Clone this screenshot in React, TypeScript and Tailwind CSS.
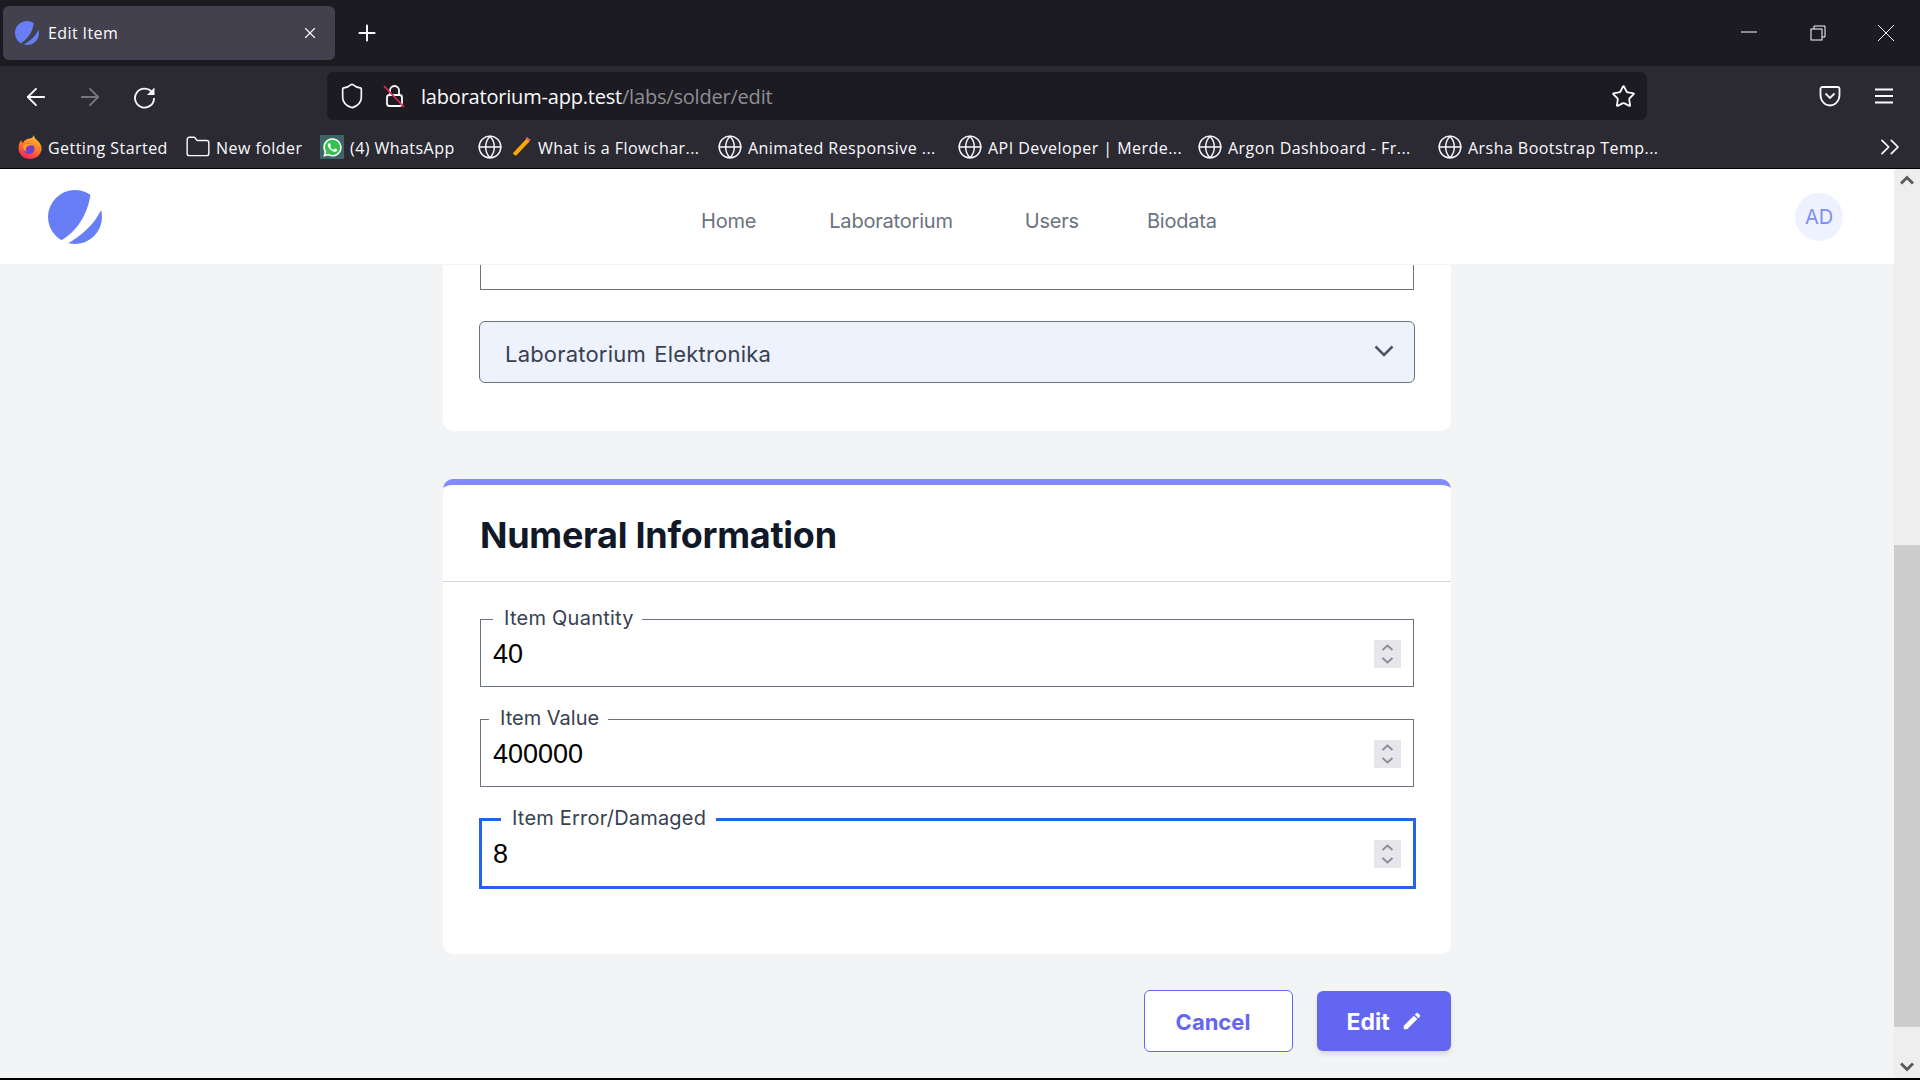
import { ArrowLeft, ArrowRight, ChevronsRight, Folder, Globe, Plus, Shield, Star, X } from 'lucide-react'
import { MdEdit } from 'react-icons/md'
import { FaWhatsapp } from 'react-icons/fa'
import type { ReactNode } from 'react'

function PlanetLogo({ size, stripe }: { size: string; stripe: string }) {
  return (
    <svg viewBox="0 0 54 54" className={size}>
      <circle cx="27" cy="27" r="27" className="fill-[#677ef6]" />
      <path d="M42.7 3 C40 25 28 42 13.7 50 L17 55 C32 47 47 35 55 16 Z" className={stripe} />
    </svg>
  )
}

function FirefoxIcon() {
  return (
    <svg viewBox="0 0 24 24" className="w-[24px] h-[24px]">
      <defs>
        <linearGradient id="fx" x1="0.7" y1="0" x2="0.3" y2="1">
          <stop offset="0" stopColor="#ffc22e" />
          <stop offset="0.5" stopColor="#ff7a2a" />
          <stop offset="1" stopColor="#f0245c" />
        </linearGradient>
      </defs>
      <path d="M16 0 C16 3 18 4 20 6 C23 9 24 12 23.5 15 C22.500 20 18 24 12 24 C6 24 1 20 0.500 14 C0.300 10 1.500 7 3.500 5 C3.500 6.500 4 7.500 5 8 C6 5 9 3.500 12 3.500 C14 3 15.500 2 16 0 Z" fill="url(#fx)" />
      <circle cx="11" cy="13.500" r="5.500" fill="#7a3cc8" />
      <path d="M5 11 C8 8 14 7 17 11 C15 10 12 10 10 11 C8 12 7 15 9 17 C6 16 5 14 5 11 Z" fill="#ff9a2e" />
    </svg>
  )
}

function WhatsAppIcon() {
  return (
    <span className="w-[24px] h-[24px] bg-[#3f6466] flex items-center justify-center relative">
      <span className="absolute w-[18px] h-[18px] rounded-full bg-[#35c04f]" />
      <FaWhatsapp size={21} className="text-white relative" />
    </span>
  )
}

function GlobeIcon() {
  return <Globe size={26} strokeWidth={1.3} className="text-[#fbfbfe] shrink-0 -mx-[1px]" />
}

function PencilIcon() {
  return (
    <svg viewBox="0 0 22 24" className="w-[21px] h-[24px] ml-[9px] shrink-0">
      <path d="M16 3 L20 6 L6 21 L1.500 23 L2 18 Z" fill="#f5a90f" stroke="#111" strokeWidth="0.6" />
      <path d="M16.500 1.500 L20.500 4.500 L19.500 6 L15.500 3 Z" fill="#f0647a" />
      <path d="M2 19 L1.500 23 L5 21.500 Z" fill="#222" />
    </svg>
  )
}

const bookmarks: { icon: ReactNode; label: string; width: string; extra?: ReactNode }[] = [
  { icon: <FirefoxIcon />, label: 'Getting Started', width: 'w-[168px]' },
  { icon: <Folder size={26} strokeWidth={1.3} className="text-[#fbfbfe] -mx-[1px]" />, label: 'New folder', width: 'w-[134px]' },
  { icon: <WhatsAppIcon />, label: '(4) WhatsApp', width: 'w-[158px]' },
  { icon: <GlobeIcon />, extra: <PencilIcon />, label: 'What is a Flowchar...', width: 'w-[240px]' },
  { icon: <GlobeIcon />, label: 'Animated Responsive ...', width: 'w-[240px]' },
  { icon: <GlobeIcon />, label: 'API Developer | Merde...', width: 'w-[240px]' },
  { icon: <GlobeIcon />, label: 'Argon Dashboard - Fr...', width: 'w-[240px]' },
  { icon: <GlobeIcon />, label: 'Arsha Bootstrap Temp...', width: 'w-[240px]' },
]

function TabStrip() {
  return (
    <div className="h-[66px] bg-[#1c1b22] flex items-start text-[#fbfbfe]">
      <div className="ml-[3px] mt-[6px] w-[332px] h-[54px] bg-[#42414d] rounded-[6px] flex items-center pl-[12px] pr-[16px]">
        <PlanetLogo size="w-[24px] h-[24px]" stripe="fill-[#42414d]" />
        <span className="ml-[9px] text-[16px] tracking-[0.4px] text-[#fbfbfe]">Edit Item</span>
        <X size={18} strokeWidth={1.5} className="ml-auto" />
      </div>
      <Plus size={26} strokeWidth={1.8} className="ml-[19px] mt-[20px]" />
      <div className="ml-auto flex items-center h-[66px] pr-[25px]">
        <svg viewBox="0 0 16 2" className="w-[16px] h-[2px] mb-[2px]"><path d="M0 1 H16" stroke="#fbfbfe" strokeWidth="1" /></svg>
        <svg viewBox="0 0 16 16" className="w-[16px] h-[16px] ml-[53px]" fill="none" stroke="#fbfbfe" strokeWidth="1">
          <rect x="1" y="4" width="11" height="11" />
          <path d="M4 4 V1 H15 V12 H12" />
        </svg>
        <svg viewBox="0 0 18 18" className="w-[18px] h-[18px] ml-[51px]" fill="none" stroke="#fbfbfe" strokeWidth="1">
          <path d="M1 1 L17 17 M17 1 L1 17" />
        </svg>
      </div>
    </div>
  )
}

function Toolbar() {
  return (
    <div className="h-[60px] bg-[#2b2a33] flex items-start text-[#fbfbfe]">
      <div className="flex items-center h-[60px] mt-[1px]">
        <ArrowLeft size={28} strokeWidth={1.6} className="ml-[22px]" />
        <ArrowRight size={28} strokeWidth={1.6} className="ml-[26px] text-[#77767c]" />
        <svg viewBox="0 0 24 24" className="w-[24px] h-[24px] ml-[29px]" fill="none">
          <path d="M19.500 8 A9.500 9.500 0 1 0 21 13" stroke="#fbfbfe" strokeWidth="1.8" />
          <path d="M21.500 2.500 V10 H14 Z" fill="#fbfbfe" />
        </svg>
      </div>
      <div className="ml-[170px] mt-[6px] w-[1320px] h-[48px] bg-[#1c1b22] rounded-[6px] flex items-center pl-[11px] pr-[11px]">
        <Shield size={28} strokeWidth={1.4} />
        <svg viewBox="0 0 24 24" className="w-[24px] h-[24px] ml-[16px]" fill="none">
          <rect x="5" y="11" width="15" height="11" rx="2.500" stroke="#fbfbfe" strokeWidth="1.800" />
          <path d="M8 11 V6.500 A4.500 4.500 0 0 1 17 6.500 V11" stroke="#fbfbfe" strokeWidth="1.800" />
          <path d="M2 2 L22 23" stroke="#e22850" strokeWidth="1.800" />
        </svg>
        <span className="ml-[15px] mt-[1px] text-[20px] tracking-[-0.2px]">
          laboratorium-app.test<span className="text-[#8f8f94]">/labs/solder/edit</span>
        </span>
        <Star size={25} strokeWidth={1.7} className="ml-auto" />
      </div>
      <div className="flex items-center h-[60px] ml-auto pr-[26px]">
        <svg viewBox="0 0 24 24" className="w-[24px] h-[24px]" fill="none" stroke="#fbfbfe" strokeWidth="1.800">
          <path d="M4.500 3 H19.500 A2 2 0 0 1 21.500 5 V11 C21.500 17 17 21.500 12 21.500 C7 21.500 2.500 17 2.500 11 V5 A2 2 0 0 1 4.500 3 Z" />
          <path d="M7.500 9.500 L12 14 L16.500 9.500" />
        </svg>
        <svg viewBox="0 0 20 16" className="w-[20px] h-[16px] ml-[32px]" fill="none" stroke="#fbfbfe" strokeWidth="1.800">
          <path d="M1 1.500 H19 M1 8 H19 M1 14.500 H19" />
        </svg>
      </div>
    </div>
  )
}

function BookmarkBar() {
  return (
    <div className="h-[43px] bg-[#2b2a33] border-b border-black flex items-start pt-[9px] pl-[18px] text-[#fbfbfe]">
      {bookmarks.map((b) => (
        <div key={b.label} className={`${b.width} flex items-center shrink-0 h-[24px]`}>
          {b.icon}
          {b.extra}
          <span className="ml-[6px] mt-[1px] text-[16px] tracking-[0.45px] whitespace-nowrap">{b.label}</span>
        </div>
      ))}
      <ChevronsRight size={32} strokeWidth={1.3} className="ml-auto mr-[14px] -mt-[4px]" />
    </div>
  )
}

function NavBar() {
  return (
    <header className="h-[96px] bg-white border-b border-[#f3f4f6] flex items-center pl-[48px] pr-[51px] shrink-0">
      <PlanetLogo size="w-[54px] h-[54px]" stripe="fill-white" />
      <nav className="ml-[599px] mt-[8px] flex text-[20px] tracking-[-0.2px] text-[#6b7280]">
        <a>Home</a>
        <a className="ml-[73px]">Laboratorium</a>
        <a className="ml-[72px]">Users</a>
        <a className="ml-[68px]">Biodata</a>
      </nav>
      <div className="ml-auto w-[48px] h-[48px] rounded-full bg-[#eef2ff] text-[#818cf8] text-[20px] flex items-center justify-center">
        AD
      </div>
    </header>
  )
}

function Spinner() {
  return (
    <div className="ml-auto w-[27px] h-[28px] bg-[#e7e6eb] flex items-center justify-center">
      <svg viewBox="0 0 27 28" className="w-[27px] h-[28px]" fill="none" stroke="#8f8d9b" strokeWidth="2">
        <path d="M8.500 10 L13.500 5.500 L18.500 10 M8.500 18 L13.500 22.500 L18.500 18" />
      </svg>
    </div>
  )
}

function NumberField({ label, value, focused, legendClass }: { label: string; value: string; focused?: boolean; legendClass: string }) {
  return (
    <fieldset
      className={
        focused
          ? 'ml-[36px] w-[937px] h-[82px] border-[3px] border-[#2563eb]'
          : 'ml-[37px] w-[934px] h-[80px] border border-[#6b7280]'
      }
    >
      <legend className={`${legendClass} text-[20px] leading-[22px] pb-[2px] text-[#374151]`}>{label}</legend>
      <div className={focused ? 'h-[46px] flex items-center pl-[11px] pr-[12px]' : 'h-[46px] flex items-center pl-[12px] pr-[12px]'}>
        <span className="font-['Liberation_Sans',sans-serif] text-[27px] leading-[30px] text-black">{value}</span>
        <Spinner />
      </div>
    </fieldset>
  )
}

export default function App() {
  return (
    <div className="w-[1920px] h-[1080px] overflow-hidden bg-black flex flex-col font-['Inter',sans-serif]">
      <div className="font-['Open_Sans',sans-serif]">
        <TabStrip />
        <Toolbar />
        <BookmarkBar />
      </div>
      <div className="h-[909px] flex shrink-0">
        <div className="w-[1894px] flex flex-col bg-[#f3f4f6]">
          <NavBar />
          <main className="w-[1008px] mx-auto">
            <section className="bg-white rounded-b-[10px] pb-[48px]">
              <div className="ml-[37px] w-[934px] h-[25px] border-x border-b border-[#6b7280]" />
              <div className="ml-[36px] mt-[31px] w-[936px] h-[62px] bg-[#eef2fd] border border-[#6b7280] rounded-[6px] flex items-center pl-[25px] pr-[20px]">
                <span className="text-[22px] tracking-[0.2px] [word-spacing:2px] text-[#374151] mt-[4px]">Laboratorium Elektronika</span>
                <svg viewBox="0 0 20 12" className="ml-auto w-[20px] h-[12px] -mt-[3px]" fill="none" stroke="#4b5563" strokeWidth="2.500">
                  <path d="M1.500 1.500 L10 10 L18.500 1.500" />
                </svg>
              </div>
            </section>
            <section className="mt-[48px] h-[475px] bg-white rounded-[10px] border-t-[6px] border-[#818cf8]">
              <div className="h-[97px] border-b border-[#d1d5db] pl-[37px] flex items-center">
                <h2 className="text-[36px] tracking-[-0.26px] font-bold text-[#111827] mt-[4px]">Numeral Information</h2>
              </div>
              <div className="pt-[25px] flex flex-col gap-[20px]">
                <NumberField label="Item Quantity" value="40" legendClass="ml-[12px] pl-[11px] pr-[8px] tracking-[0.25px]" />
                <NumberField label="Item Value" value="400000" legendClass="ml-[8px] pl-[11px] pr-[9px]" />
                <NumberField label="Item Error/Damaged" value="8" focused legendClass="ml-[19px] pl-[11px] pr-[10px] tracking-[0.2px]" />
              </div>
            </section>
            <div className="mt-[36px] flex justify-end items-center gap-[24px]">
              <button className="w-[149px] h-[62px] pt-[3px] pr-[11px] bg-white border border-[#6366f1] rounded-[6px] text-[22px] font-bold text-[#6366f1]">
                Cancel
              </button>
              <button className="w-[134px] h-[60px] bg-[#6366f1] rounded-[6px] text-[23px] font-bold text-white flex items-center justify-center gap-[11px] pl-[1px] shadow-md">
                <span className="pt-[3px]">Edit</span>
                <MdEdit size={22} />
              </button>
            </div>
          </main>
        </div>
        <div className="w-[26px] bg-[#eeeeee] flex flex-col items-center">
          <svg viewBox="0 0 14 10" className="w-[14px] h-[10px] mt-[6px]" fill="none" stroke="#5a5a5a" strokeWidth="3">
            <path d="M1 8.500 L7 2.500 L13 8.500" />
          </svg>
          <div className="w-[26px] h-[482px] bg-[#cdcdcd] mt-[360px]" />
          <svg viewBox="0 0 14 10" className="w-[14px] h-[10px] mt-auto mb-[6px]" fill="none" stroke="#5a5a5a" strokeWidth="3">
            <path d="M1 1.500 L7 7.500 L13 1.500" />
          </svg>
        </div>
      </div>
    </div>
  )
}
